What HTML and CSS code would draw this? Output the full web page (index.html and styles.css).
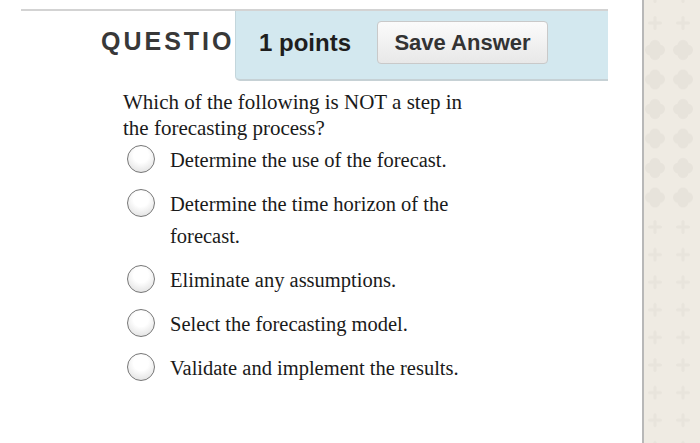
FILE: index.html
```html
<!DOCTYPE html>
<html lang="en">
<head>
    <meta charset="UTF-8">
    <meta name="viewport" content="width=device-width, initial-scale=1.0">
    <title>Question 1</title>
    <link rel="stylesheet" href="styles.css">
</head>
<body>
    <div class="page">
        <main class="main">
            <!-- Cabeçalho da questão -->
            <div class="q-header">
                <div class="q-title">QUESTION 1</div>
                <div class="q-points">
                    <span class="points">1 points</span>
                    <button class="save-btn">Save Answer</button>
                </div>
            </div>

            <div class="q-body">
                <p class="q-text">Which of the following is NOT a step in the forecasting process?</p>
                <ul class="options">
                    <li class="option"><span class="radio"></span><span class="opt-text">Determine the use of the forecast.</span></li>
                    <li class="option"><span class="radio"></span><span class="opt-text">Determine the time horizon of the forecast.</span></li>
                    <li class="option"><span class="radio"></span><span class="opt-text">Eliminate any assumptions.</span></li>
                    <li class="option"><span class="radio"></span><span class="opt-text">Select the forecasting model.</span></li>
                    <li class="option"><span class="radio"></span><span class="opt-text">Validate and implement the results.</span></li>
                </ul>
            </div>
        </main>

        <!-- Painel lateral com padrão -->
        <aside class="side">
            <svg width="56" height="443" viewBox="0 0 56 443">
                <defs>
                    <g id="plus" class="shape-plus">
                        <rect x="-7" y="-1.5" width="14" height="3" rx="1.5"/>
                        <rect x="-1.5" y="-7" width="3" height="14" rx="1.5"/>
                    </g>
                    <g id="clover" class="shape-clover">
                        <circle cx="-4.5" cy="0" r="5.5"/>
                        <circle cx="4.5" cy="0" r="5.5"/>
                        <circle cx="0" cy="-4.5" r="5.5"/>
                        <circle cx="0" cy="4.5" r="5.5"/>
                    </g>
                    <pattern id="clovers" patternUnits="userSpaceOnUse" x="0" y="35.25" width="56" height="29.5">
                        <use href="#clover" x="11" y="14.75"/>
                        <use href="#clover" x="39" y="14.75"/>
                    </pattern>
                    <pattern id="pluses" patternUnits="userSpaceOnUse" x="0" y="213.2" width="56" height="27.6">
                        <use href="#plus" x="11" y="13.8"/>
                        <use href="#plus" x="39" y="13.8"/>
                    </pattern>
                </defs>
                <use href="#plus" x="11" y="-4"/>
                <use href="#plus" x="39" y="-4"/>
                <use href="#plus" x="11" y="23"/>
                <use href="#plus" x="39" y="23"/>
                <rect x="0" y="35.25" width="56" height="177" fill="url(#clovers)"/>
                <rect x="0" y="213.2" width="56" height="230" fill="url(#pluses)"/>
            </svg>
        </aside>
    </div>
</body>
</html>
```

FILE: styles.css
```css
body {
    margin: 0;
    padding: 0;
    background-color: #fff;
    font-family: "Liberation Sans", Arial, sans-serif;
}

.page {
    display: flex;
    width: 700px;
    height: 443px;
    overflow: hidden;
}

.main {
    width: 642px;
    padding-top: 9px;
}

/* Cabeçalho */
.q-header {
    display: flex;
    margin-left: 21px;
    width: 587px;
    height: 70px;
    border-top: 2px solid #d3d3d3;
}

.q-title {
    width: 134px;
    margin-left: 80px;
    padding-top: 15px;
    line-height: 30px;
    height: 30px;
    font-size: 25px;
    font-weight: bold;
    letter-spacing: 3px;
    color: #383838;
    white-space: nowrap;
    overflow: hidden;
}

.q-points {
    flex: 1;
    display: flex;
    align-items: flex-start;
    padding: 10px 0 0 23px;
    background-color: #d3e8ef;
    border-left: 1px solid #c3d6dc;
    border-bottom: 2px solid #c6d1d5;
    border-bottom-left-radius: 5px;
}

.points {
    font-size: 24px;
    font-weight: bold;
    color: #1e1e1e;
    line-height: 43px;
}

.save-btn {
    margin-left: 26px;
    width: 171px;
    height: 43px;
    padding: 0;
    font-family: "Liberation Sans", Arial, sans-serif;
    font-size: 22px;
    font-weight: bold;
    color: #333;
    background: linear-gradient(#fbfbfb, #e8e8e8);
    border: 1px solid #c9c9c9;
    border-radius: 4px;
}

/* Corpo da questão */
.q-body {
    padding-left: 123px;
    font-family: "Liberation Serif", "Times New Roman", serif;
    color: #1a1a1a;
}

.q-text {
    margin: 8px 0 0;
    width: 345px;
    font-size: 21px;
    line-height: 26px;
}

.options {
    list-style: none;
    margin: 3px 0 0;
    padding: 0;
    display: flex;
    flex-direction: column;
    gap: 12px;
}

.option {
    display: flex;
    align-items: flex-start;
    margin-left: 4px;
}

.radio {
    flex: none;
    width: 26px;
    height: 26px;
    margin-top: 1px;
    border: 1.5px solid #777;
    border-radius: 50%;
    background: radial-gradient(circle at 50% 35%, #fff 35%, #d9d9d9 100%);
}

.opt-text {
    margin-left: 15px;
    width: 290px;
    font-size: 20.5px;
    line-height: 32px;
}

/* Painel lateral */
.side {
    width: 56px;
    border-left: 2px solid #b8b8b8;
    background-color: #efebe3;
}

.side svg {
    display: block;
}

.shape-clover {
    fill: #e7e3db;
}

.shape-plus {
    fill: #e8e4dc;
}
```
